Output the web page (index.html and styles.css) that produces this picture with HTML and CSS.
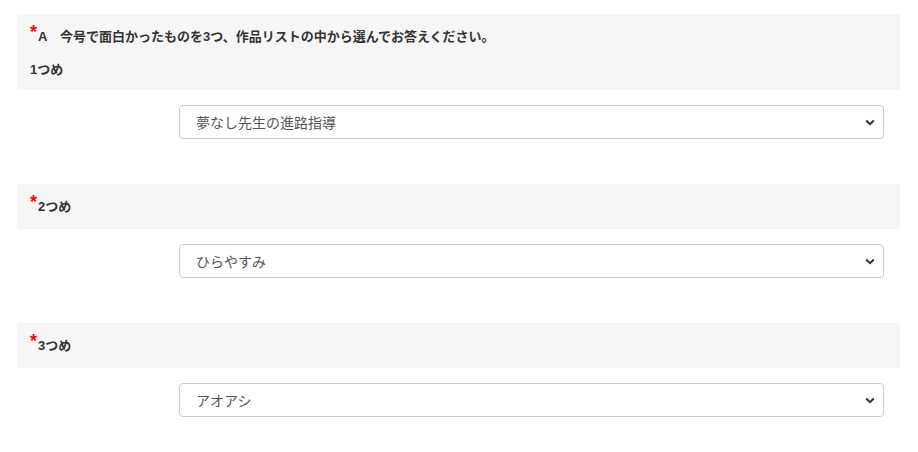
FILE: index.html
```html
<!DOCTYPE html>
<html lang="ja">
<head>
<meta charset="utf-8">
<link rel="stylesheet" href="styles.css">
</head>
<body>
<div class="form">
  <div class="panel panel-first">
    <div class="title"><span class="req">*</span>A　今号で面白かったものを3つ、作品リストの中から選んでお答えください。</div>
    <div class="label">1つめ</div>
  </div>
  <div class="field">
    <div class="select">
      <span class="value">夢なし先生の進路指導</span>
      <svg class="chev" width="10" height="7" viewBox="0 0 10 7"><path d="M1.2 1.5 L5 5.2 L8.8 1.5" fill="none" stroke="#333" stroke-width="2"/></svg>
    </div>
  </div>
  <div class="panel">
    <div class="label"><span class="req">*</span>2つめ</div>
  </div>
  <div class="field">
    <div class="select">
      <span class="value">ひらやすみ</span>
      <svg class="chev" width="10" height="7" viewBox="0 0 10 7"><path d="M1.2 1.5 L5 5.2 L8.8 1.5" fill="none" stroke="#333" stroke-width="2"/></svg>
    </div>
  </div>
  <div class="panel">
    <div class="label"><span class="req">*</span>3つめ</div>
  </div>
  <div class="field">
    <div class="select">
      <span class="value">アオアシ</span>
      <svg class="chev" width="10" height="7" viewBox="0 0 10 7"><path d="M1.2 1.5 L5 5.2 L8.8 1.5" fill="none" stroke="#333" stroke-width="2"/></svg>
    </div>
  </div>
</div>
</body>
</html>
```
FILE: styles.css
```css
html, body {
  margin: 0;
  padding: 0;
  background: #fff;
}
body {
  font-family: "Liberation Sans", "Noto Sans CJK JP", sans-serif;
  color: #333;
}
.form {
  width: 883px;
  margin-left: 17px;
  padding-top: 14px;
}
.panel {
  background: #f6f6f6;
  padding: 12px 13px 12px;
}
.panel-first {
  padding-bottom: 10px;
}
.title, .label {
  font-size: 13px;
  font-weight: bold;
  line-height: 21px;
  height: 21px;
  overflow: visible;
  white-space: nowrap;
}
.title {
  margin-bottom: 12px;
}
.req {
  color: #ff0000;
  font-size: 18px;
  font-weight: bold;
  vertical-align: 3px;
  line-height: 0;
  margin-right: 1px;
}
.field {
  padding: 15px 16px 45px 162px;
}
.select {
  height: 32px;
  border: 1px solid #cccccc;
  border-radius: 4px;
  background: #fff;
  display: flex;
  align-items: center;
  justify-content: space-between;
  padding: 0 8px 0 16px;
}
.value {
  font-size: 14px;
  color: #555;
}
.chev {
  display: block;
}
```
